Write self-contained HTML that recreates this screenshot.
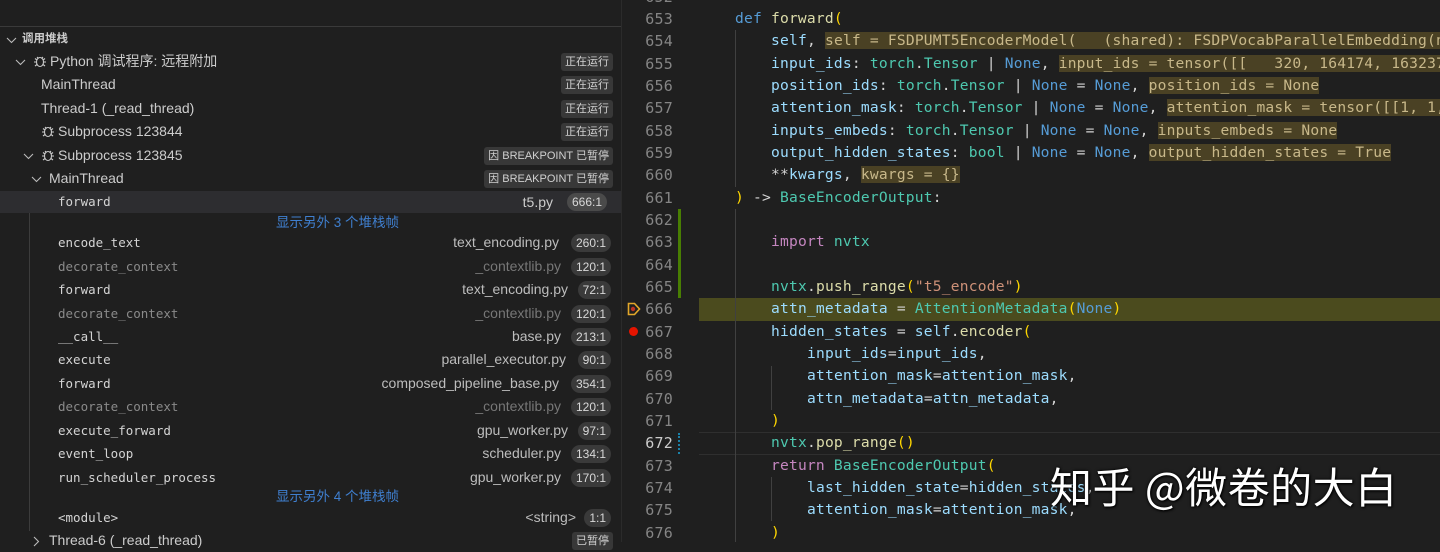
<!DOCTYPE html>
<html><head><meta charset="utf-8"><style>
*{margin:0;padding:0;box-sizing:border-box}
body{width:1440px;height:542px;overflow:hidden;background:#1f1f1f;position:relative;font-family:"Liberation Sans","Noto Sans CJK SC",sans-serif}
#left{position:absolute;left:0;top:0;width:621px;height:542px;background:#1f1f1f;color:#cccccc;font-size:14px}
#left .sep{position:absolute;left:0;top:26px;width:621px;height:1px;background:#3a3a3a}
.r{position:absolute;left:0;width:621px;height:23px;line-height:23px;white-space:nowrap}
.r .t{position:absolute}
.badge{position:absolute;right:8px;top:3px;height:18px;line-height:18px;padding:0 4px;background:#383838;border-radius:3px;font-size:11px;color:#d0d0d0}
.fn{font-family:"DejaVu Sans Mono","Liberation Mono",monospace;font-size:12.5px;color:#d4d4d4}
.dim{color:#8a8a8a}
.file{position:absolute;right:58px;font-size:14px;color:#bdbdbd}
.file.dim{color:#777}
.ln{position:absolute;right:10px;top:3px;height:18px;line-height:18px;padding:0 5px;border-radius:9px;background:#3a3a3a;font-size:12px;color:#d8d8d8}
.more{position:absolute;left:276px;color:#3f7fcf;font-size:13.5px}
.chev{position:absolute;top:8px}
.bug{display:inline-block;vertical-align:-2px;margin-right:3px}
#ed{position:absolute;left:621px;top:0;width:819px;height:542px;background:#1f1f1f;border-left:1px solid #2b2b2b}
.cl{position:absolute;left:0;width:819px;height:22.35px;line-height:22.35px;font-family:"DejaVu Sans Mono","Liberation Mono",monospace;font-size:14.6px;white-space:pre;letter-spacing:0.2px}
.cl .n{position:absolute;left:0;width:51px;text-align:right;color:#858585;font-size:15px}
.cl .c{position:absolute;left:113px;color:#9cdcfe}
.k{color:#569cd6}.f{color:#dcdcaa}.ty{color:#4ec9b0}.p{color:#d4d4d4}.y{color:#ffd700}.s{color:#ce9178}.kw{color:#c586c0}
.iv{background:#4a4124;color:#c8b88a}
#wm{position:absolute;left:1050px;top:455px;font-family:"Noto Sans CJK SC",sans-serif;font-size:42px;color:#fff;text-shadow:0 0 3px #000,1px 1px 2px #000;white-space:nowrap;letter-spacing:0.5px}
</style></head><body>
<div id="left">
<div class="sep"></div>
<div class="r" style="top:28px"><svg class="chev" style="left:6px" width="11" height="8" viewBox="0 0 11 8"><path d="M1 2l4.5 4.5L10 2" fill="none" stroke="#bbb" stroke-width="1.1"/></svg><span class="t" style="left:22px;font-size:11.5px;font-weight:bold">调用堆栈</span></div>
<div class="r" style="top:50px"><svg class="chev" style="left:15px" width="11" height="8" viewBox="0 0 11 8"><path d="M1 2l4.5 4.5L10 2" fill="none" stroke="#bbb" stroke-width="1.1"/></svg><span class="t" style="left:33px"><svg class="bug" width="14" height="14" viewBox="0 0 14 14" fill="none" stroke="#ccc" stroke-width="1.1"><ellipse cx="7" cy="8" rx="3.5" ry="4.5"/><path d="M4 3l1.5 1.5M10 3L8.5 4.5M1 8h2.5M10.5 8H13M2 12l2-1.5M12 12l-2-1.5M2 4.5l2 1.5M12 4.5l-2 1.5"/></svg>Python 调试程序: 远程附加</span><span class="badge">正在运行</span></div>
<div class="r" style="top:73px"><span class="t" style="left:41px">MainThread</span><span class="badge">正在运行</span></div>
<div class="r" style="top:97px"><span class="t" style="left:41px">Thread-1 (_read_thread)</span><span class="badge">正在运行</span></div>
<div class="r" style="top:120px"><span class="t" style="left:41px"><svg class="bug" width="14" height="14" viewBox="0 0 14 14" fill="none" stroke="#ccc" stroke-width="1.1"><ellipse cx="7" cy="8" rx="3.5" ry="4.5"/><path d="M4 3l1.5 1.5M10 3L8.5 4.5M1 8h2.5M10.5 8H13M2 12l2-1.5M12 12l-2-1.5M2 4.5l2 1.5M12 4.5l-2 1.5"/></svg>Subprocess 123844</span><span class="badge">正在运行</span></div>
<div class="r" style="top:144px"><svg class="chev" style="left:23px" width="11" height="8" viewBox="0 0 11 8"><path d="M1 2l4.5 4.5L10 2" fill="none" stroke="#bbb" stroke-width="1.1"/></svg><span class="t" style="left:41px"><svg class="bug" width="14" height="14" viewBox="0 0 14 14" fill="none" stroke="#ccc" stroke-width="1.1"><ellipse cx="7" cy="8" rx="3.5" ry="4.5"/><path d="M4 3l1.5 1.5M10 3L8.5 4.5M1 8h2.5M10.5 8H13M2 12l2-1.5M12 12l-2-1.5M2 4.5l2 1.5M12 4.5l-2 1.5"/></svg>Subprocess 123845</span><span class="badge">因 BREAKPOINT 已暂停</span></div>
<div class="r" style="top:167px"><svg class="chev" style="left:31px" width="11" height="8" viewBox="0 0 11 8"><path d="M1 2l4.5 4.5L10 2" fill="none" stroke="#bbb" stroke-width="1.1"/></svg><span class="t" style="left:49px">MainThread</span><span class="badge">因 BREAKPOINT 已暂停</span></div>
<div style="position:absolute;left:29px;top:191px;width:1px;height:340px;background:#3c3c3c"></div>
<div class="r" style="top:191px;height:22px;line-height:22px;background:#2d2d30"><span class="t fn" style="left:58px">forward</span><span class="file" style="right:68px;color:#ccc">t5.py</span><span class="ln" style="right:14px;top:2px;background:#4a4a4a">666:1</span></div>
<div class="r" style="top:211px"><span class="more">显示另外 3 个堆栈帧</span></div>
<div class="r" style="top:231px"><span class="t fn" style="left:58px">encode_text</span><span class="file" style="right:62px">text_encoding.py</span><span class="ln">260:1</span></div>
<div class="r" style="top:255px"><span class="t fn dim" style="left:58px">decorate_context</span><span class="file dim" style="right:60px">_contextlib.py</span><span class="ln dim">120:1</span></div>
<div class="r" style="top:278px"><span class="t fn" style="left:58px">forward</span><span class="file" style="right:53px">text_encoding.py</span><span class="ln">72:1</span></div>
<div class="r" style="top:302px"><span class="t fn dim" style="left:58px">decorate_context</span><span class="file dim" style="right:60px">_contextlib.py</span><span class="ln dim">120:1</span></div>
<div class="r" style="top:325px"><span class="t fn" style="left:58px">__call__</span><span class="file" style="right:60px">base.py</span><span class="ln">213:1</span></div>
<div class="r" style="top:348px"><span class="t fn" style="left:58px">execute</span><span class="file" style="right:55px">parallel_executor.py</span><span class="ln">90:1</span></div>
<div class="r" style="top:372px"><span class="t fn" style="left:58px">forward</span><span class="file" style="right:62px">composed_pipeline_base.py</span><span class="ln">354:1</span></div>
<div class="r" style="top:395px"><span class="t fn dim" style="left:58px">decorate_context</span><span class="file dim" style="right:60px">_contextlib.py</span><span class="ln dim">120:1</span></div>
<div class="r" style="top:419px"><span class="t fn" style="left:58px">execute_forward</span><span class="file" style="right:53px">gpu_worker.py</span><span class="ln">97:1</span></div>
<div class="r" style="top:442px"><span class="t fn" style="left:58px">event_loop</span><span class="file" style="right:60px">scheduler.py</span><span class="ln">134:1</span></div>
<div class="r" style="top:466px"><span class="t fn" style="left:58px">run_scheduler_process</span><span class="file" style="right:60px">gpu_worker.py</span><span class="ln">170:1</span></div>
<div class="r" style="top:485px"><span class="more">显示另外 4 个堆栈帧</span></div>
<div class="r" style="top:506px"><span class="t fn" style="left:58px">&lt;module&gt;</span><span class="file" style="right:45px">&lt;string&gt;</span><span class="ln">1:1</span></div>
<div class="r" style="top:529px"><svg class="chev" style="left:32px;top:7px" width="8" height="11" viewBox="0 0 8 11"><path d="M2 1l4.5 4.5L2 10" fill="none" stroke="#bbb" stroke-width="1.1"/></svg><span class="t" style="left:49px">Thread-6 (_read_thread)</span><span class="badge">已暂停</span></div>
</div>

<div id="ed">
<div style="position:absolute;left:77px;top:298px;width:742px;height:23px;background:#4b4b1e"></div>
<div style="position:absolute;left:77px;top:432px;width:742px;height:23px;border-top:1px solid #2f2f2f;border-bottom:1px solid #2f2f2f"></div>
<div style="position:absolute;left:56px;top:209px;width:3px;height:89px;background:#487e02"></div>
<div style="position:absolute;left:56px;top:433px;width:2px;height:21px;border-left:2px dotted #1b81a8"></div>
<div style="position:absolute;left:113px;top:30px;width:1px;height:157px;background:#404040"></div>
<div style="position:absolute;left:113px;top:209px;width:1px;height:333px;background:#404040"></div>
<div style="position:absolute;left:149px;top:366px;width:1px;height:44px;background:#404040"></div>
<div style="position:absolute;left:149px;top:477px;width:1px;height:44px;background:#404040"></div>
<svg style="position:absolute;left:5px;top:302px" width="14" height="14" viewBox="0 0 14 14"><path d="M1.5 1.5h6l5 5.5-5 5.5h-6z" fill="none" stroke="#e2a72a" stroke-width="1.6"/><circle cx="6" cy="7" r="2.2" fill="#b32"/></svg>
<div style="position:absolute;left:7px;top:327px;width:9px;height:9px;border-radius:50%;background:#e51400"></div>

<div class="cl" style="top:-14px"><span class="n">652</span></div>
<div class="cl" style="top:8px"><span class="n">653</span><span class="c" style="left:113px"><span class="k">def</span> <span class="f">forward</span><span class="y">(</span></span></div>
<div class="cl" style="top:30.4px"><span class="n">654</span><span class="c" style="left:149px">self<span class="p">,</span> <span class="iv">self = FSDPUMT5EncoderModel(   (shared): FSDPVocabParallelEmbedding(n</span></span></div>
<div class="cl" style="top:52.7px"><span class="n">655</span><span class="c" style="left:149px">input_ids<span class="p">:</span> <span class="ty">torch</span><span class="p">.</span><span class="ty">Tensor</span> <span class="p">|</span> <span class="k">None</span><span class="p">,</span> <span class="iv">input_ids = tensor([[   320, 164174, 163237</span></span></div>
<div class="cl" style="top:75px"><span class="n">656</span><span class="c" style="left:149px">position_ids<span class="p">:</span> <span class="ty">torch</span><span class="p">.</span><span class="ty">Tensor</span> <span class="p">|</span> <span class="k">None</span> <span class="p">=</span> <span class="k">None</span><span class="p">,</span> <span class="iv">position_ids = None</span></span></div>
<div class="cl" style="top:97.4px"><span class="n">657</span><span class="c" style="left:149px">attention_mask<span class="p">:</span> <span class="ty">torch</span><span class="p">.</span><span class="ty">Tensor</span> <span class="p">|</span> <span class="k">None</span> <span class="p">=</span> <span class="k">None</span><span class="p">,</span> <span class="iv">attention_mask = tensor([[1, 1, </span></span></div>
<div class="cl" style="top:119.7px"><span class="n">658</span><span class="c" style="left:149px">inputs_embeds<span class="p">:</span> <span class="ty">torch</span><span class="p">.</span><span class="ty">Tensor</span> <span class="p">|</span> <span class="k">None</span> <span class="p">=</span> <span class="k">None</span><span class="p">,</span> <span class="iv">inputs_embeds = None</span></span></div>
<div class="cl" style="top:142px"><span class="n">659</span><span class="c" style="left:149px">output_hidden_states<span class="p">:</span> <span class="ty">bool</span> <span class="p">|</span> <span class="k">None</span> <span class="p">=</span> <span class="k">None</span><span class="p">,</span> <span class="iv">output_hidden_states = True</span></span></div>
<div class="cl" style="top:164.4px"><span class="n">660</span><span class="c" style="left:149px"><span class="p">**</span>kwargs<span class="p">,</span> <span class="iv">kwargs = {}</span></span></div>
<div class="cl" style="top:186.7px"><span class="n">661</span><span class="c" style="left:113px"><span class="y">)</span> <span class="p">-&gt;</span> <span class="ty">BaseEncoderOutput</span><span class="p">:</span></span></div>
<div class="cl" style="top:209px"><span class="n">662</span></div>
<div class="cl" style="top:231.4px"><span class="n">663</span><span class="c" style="left:149px"><span class="kw">import</span> <span class="ty">nvtx</span></span></div>
<div class="cl" style="top:253.7px"><span class="n">664</span></div>
<div class="cl" style="top:276px"><span class="n">665</span><span class="c" style="left:149px"><span class="ty">nvtx</span><span class="p">.</span><span class="f">push_range</span><span class="y">(</span><span class="s">"t5_encode"</span><span class="y">)</span></span></div>
<div class="cl" style="top:298.4px"><span class="n">666</span><span class="c" style="left:149px">attn_metadata <span class="p">=</span> <span class="ty">AttentionMetadata</span><span class="y">(</span><span class="k">None</span><span class="y">)</span></span></div>
<div class="cl" style="top:320.7px"><span class="n">667</span><span class="c" style="left:149px">hidden_states <span class="p">=</span> self<span class="p">.</span><span class="f">encoder</span><span class="y">(</span></span></div>
<div class="cl" style="top:343px"><span class="n">668</span><span class="c" style="left:185px">input_ids<span class="p">=</span>input_ids<span class="p">,</span></span></div>
<div class="cl" style="top:365.4px"><span class="n">669</span><span class="c" style="left:185px">attention_mask<span class="p">=</span>attention_mask<span class="p">,</span></span></div>
<div class="cl" style="top:387.7px"><span class="n">670</span><span class="c" style="left:185px">attn_metadata<span class="p">=</span>attn_metadata<span class="p">,</span></span></div>
<div class="cl" style="top:410px"><span class="n">671</span><span class="c" style="left:149px"><span class="y">)</span></span></div>
<div class="cl" style="top:432.4px"><span class="n" style="color:#ccc">672</span><span class="c" style="left:149px"><span class="ty">nvtx</span><span class="p">.</span><span class="f">pop_range</span><span class="y">()</span></span></div>
<div class="cl" style="top:454.7px"><span class="n">673</span><span class="c" style="left:149px"><span class="kw">return</span> <span class="ty">BaseEncoderOutput</span><span class="y">(</span></span></div>
<div class="cl" style="top:477px"><span class="n">674</span><span class="c" style="left:185px">last_hidden_state<span class="p">=</span>hidden_states<span class="p">,</span></span></div>
<div class="cl" style="top:499.4px"><span class="n">675</span><span class="c" style="left:185px">attention_mask<span class="p">=</span>attention_mask<span class="p">,</span></span></div>
<div class="cl" style="top:521.7px"><span class="n">676</span><span class="c" style="left:149px"><span class="y">)</span></span></div>
</div>
<div id="wm">知乎 @微卷的大白</div>
</body></html>
